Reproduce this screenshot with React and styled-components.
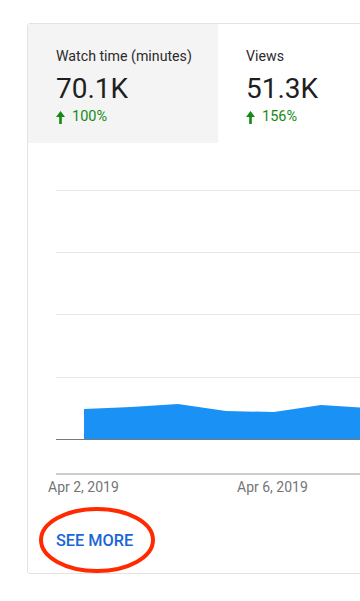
import React from "react";
import styled, { createGlobalStyle } from "styled-components";

const GlobalStyle = createGlobalStyle`
    html, body {
        margin: 0;
        padding: 0;
        background: #fff;
        overflow: hidden;
    }
    body {
        font-family: Roboto, "Noto Sans", Arial, sans-serif;
    }
`;

const Page = styled.div`
    width: 360px;
    height: 601px;
    padding: 23px 0 0 27px;
    box-sizing: border-box;
    overflow: hidden;
`;

const Card = styled.div`
    position: relative;
    width: 420px;
    height: 551px;
    box-sizing: border-box;
    border: 1px solid #e3e3e3;
    border-radius: 3px;
    background: #fff;
`;

const Tabs = styled.div`
    display: flex;
`;

const Tab = styled.div`
    width: 190px;
    height: 119px;
    box-sizing: border-box;
    padding: 23px 0 0 28px;
    background: ${(p) => (p.active ? "#f4f4f4" : "#fff")};
`;

const Label = styled.div`
    font-size: 14.2px;
    line-height: 18px;
    color: #2b2b2b;
`;

const Value = styled.div`
    margin-top: 6px;
    font-size: 28px;
    line-height: 36px;
    color: #1f1f1f;
`;

const Change = styled.div`
    display: flex;
    align-items: center;
    gap: 7px;
    margin-top: 1px;
    font-size: 14.5px;
    line-height: 18px;
    color: #148a14;
`;

const Chart = styled.svg`
    display: block;
    margin-top: 17px;
`;

const Dates = styled.div`
    display: flex;
    margin-top: 1px;
    padding-left: 20px;
    font-size: 14px;
    line-height: 20px;
    color: #757575;
`;

const DateLabel = styled.div`
    width: 189px;
`;

const SeeMore = styled.div`
    margin: 34px 0 0 28px;
    font-size: 16.3px;
    font-weight: 500;
    line-height: 20px;
    color: #1a66d6;
`;

const Circle = styled.svg`
    position: absolute;
    left: 8px;
    top: 481px;
`;

const UpArrow = () => (
    <svg width="9" height="13" viewBox="0 0 9 13">
        <path d="M4.5 0 L9 6 L5.8 6 L5.8 13 L3.2 13 L3.2 6 L0 6 Z" fill="#148a14" />
    </svg>
);

const stats = [
    { label: "Watch time (minutes)", value: "70.1K", change: "100%", active: true },
    { label: "Views", value: "51.3K", change: "156%" },
];

// area points, x relative to card, y relative to chart top
const points = [
    [56, 249],
    [103, 247],
    [150, 244],
    [198, 251],
    [246, 252],
    [293, 245],
    [340, 248],
    [420, 248],
];

export default function App() {
    const top = points.map((p) => p.join(",")).join(" ");
    const area = `56,279 ${top} 420,279`;
    return (
        <Page>
            <GlobalStyle />
            <Card>
                <Tabs>
                    {stats.map((s) => (
                        <Tab key={s.label} active={s.active}>
                            <Label>{s.label}</Label>
                            <Value>{s.value}</Value>
                            <Change>
                                <UpArrow />
                                {s.change}
                            </Change>
                        </Tab>
                    ))}
                </Tabs>
                <Chart width="420" height="316" viewBox="0 0 420 316">
                    {[30, 92, 154, 217].map((y) => (
                        <line key={y} x1="28" x2="420" y1={y + 0.5} y2={y + 0.5} stroke="#e6e6e6" strokeWidth="1" />
                    ))}
                    <polygon points={area} fill="#1a92f5" />
                    <line x1="28" x2="420" y1="279.5" y2="279.5" stroke="#7a7a7a" strokeWidth="1" />
                    <line x1="28" x2="420" y1="314" y2="314" stroke="#bdbdbd" strokeWidth="1.5" />
                </Chart>
                <Dates>
                    <DateLabel>Apr 2, 2019</DateLabel>
                    <DateLabel>Apr 6, 2019</DateLabel>
                </Dates>
                <SeeMore>SEE MORE</SeeMore>
                <Circle width="122" height="70" viewBox="0 0 122 70">
                    <ellipse cx="61" cy="35" rx="56" ry="31" fill="none" stroke="#ff2a00" strokeWidth="4" />
                </Circle>
            </Card>
        </Page>
    );
}
